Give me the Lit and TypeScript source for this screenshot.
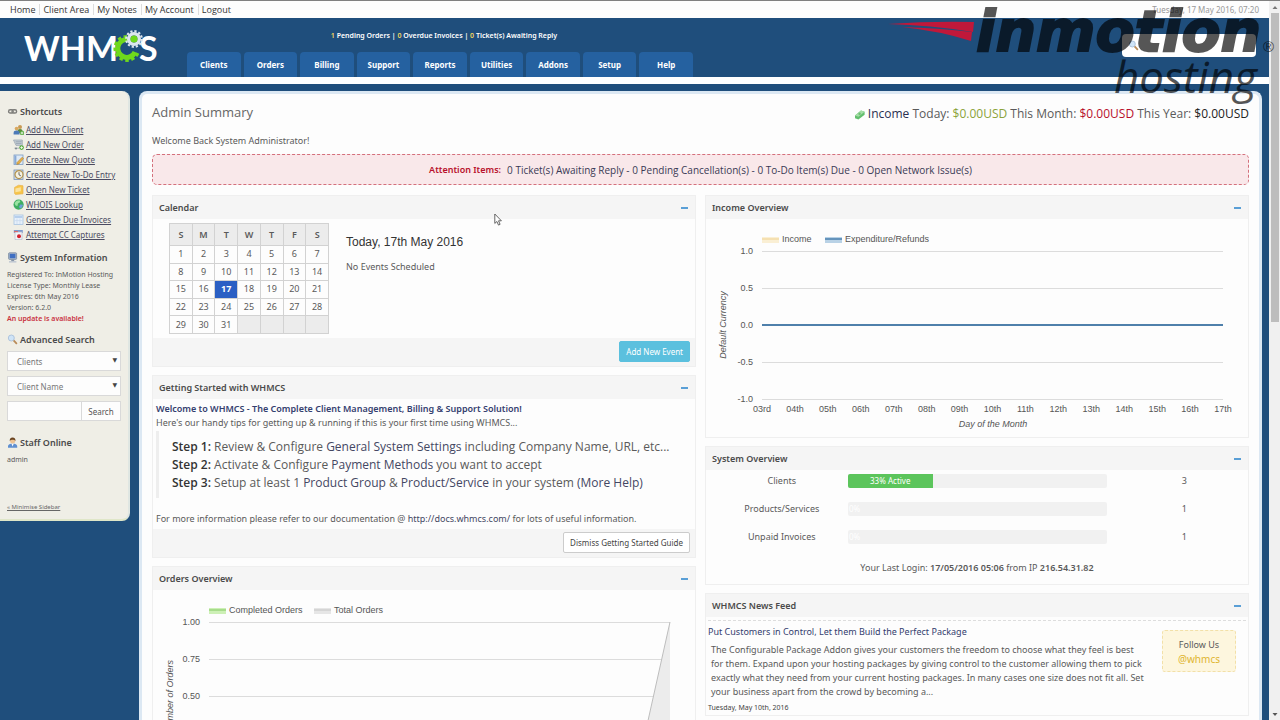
import { LitElement, html, svg, css, nothing } from "lit";
import { customElement, property } from "lit/decorators.js";

const ICONS: Record<string, unknown> = {
  link: svg`<g fill="none" stroke="#7d7d7a" stroke-width="1.4"><rect x="1.6" y="3.8" width="4.6" height="3.2" rx="1.6"/><rect x="5" y="3.8" width="4.6" height="3.2" rx="1.6"/></g>`,
  client: svg`<circle cx="7" cy="3" r="2" fill="#c99a55"/><path d="M4.5 9V7q0-2 2.5-2t2.6 2v2z" fill="#5c8a3a"/><circle cx="3.6" cy="4.6" r="1.9" fill="#d8a860"/><path d="M0.6 10.6V9q0-2.4 3-2.4t3 2.4v1.6z" fill="#4d7ab8"/><circle cx="9" cy="9" r="2.2" fill="#56a83c"/><path d="M7.6 9h2.8M9 7.6v2.8" stroke="#fff" stroke-width=".8"/>`,
  order: svg`<path d="M0.5 1h8.8v5.4H3z" fill="#c4ced6" stroke="#a0aab4" stroke-width=".8"/><path d="M1.4 9.2h5M2.6 2.8h6M3 4.6h5.4" stroke="#8a97a6" stroke-width=".7"/><circle cx="3" cy="9.6" r="1" fill="#7b868c"/><circle cx="8.6" cy="8.6" r="2.3" fill="#58ad3e"/><path d="M7.2 8.6H10M8.6 7.2V10" stroke="#fff" stroke-width=".8"/>`,
  quote: svg`<rect x="1" y="1" width="9" height="9.5" fill="#dde9f6" stroke="#7d9cc4" stroke-width=".8"/><path d="M1.4 1.5h2v8.6h-2z" fill="#88a9d6"/><path d="M4 8.5l5-5.2 1.6 1.2-4.6 5.4-2.2.5z" fill="#e6b048" stroke="#a87a2a" stroke-width=".5"/>`,
  todo: svg`<rect x="1" y="1" width="9" height="9.5" fill="#cfdcea" stroke="#7a92b3" stroke-width=".8"/><circle cx="6" cy="5.6" r="4" fill="#f4f1e2" stroke="#b4934c" stroke-width="1.2"/><path d="M6 3.2v2.6l1.8 1" fill="none" stroke="#555" stroke-width=".9"/>`,
  ticket: svg`<path d="M1.6 3.4l4-2.2L10 1.8v8L2.4 10.4 1.6 9.6z" fill="#f7c64a" stroke="#eab04a" stroke-width=".7"/><path d="M2.4 4.6l5.4-1.4v4L2.4 8.2z" fill="#fbe3a0"/>`,
  whois: svg`<circle cx="5.6" cy="5.6" r="5.1" fill="#3fae62"/><path d="M1.6 4.4Q3 1 6.6 1.2L7.4 3 5 4.6 4.4 7 2.6 6.6z" fill="#9be3a2"/><path d="M7.4 5.4l2.6.4-1 2.6-2 1-1-1.6z" fill="#6f9fdc"/>`,
  invoice: svg`<rect x="1" y="1" width="9" height="9.4" fill="#e7f0fa" stroke="#a9c3e2" stroke-width=".8"/><path d="M1.5 2h8v2h-8z" fill="#b7cfec"/><path d="M4 4.5v5.6M7 4.5v5.6M1.5 6.6h8" stroke="#c5d8ee" stroke-width=".7"/>`,
  capture: svg`<path d="M0.8 1h9v3h-9z" fill="#7e9cce"/><path d="M2 3h7v7.6H2z" fill="#f3f4f8" stroke="#b3b9cc" stroke-width=".7"/><path d="M1 2.6h4" stroke="#d66"/><circle cx="6" cy="7.2" r="2" fill="#d4232e"/>`,
  computer: svg`<rect x="1.6" y=".8" width="8" height="6.6" rx=".8" fill="#a9b8cc" stroke="#6f7f96" stroke-width=".7"/><rect x="2.8" y="1.9" width="5.6" height="4.3" fill="#3f6fc2"/><path d="M4.5 7.6h2.4l.5 1.6H4z" fill="#8795a8"/><path d="M2 9.2h7.4v1.3H2z" fill="#b9c3d0"/>`,
  search: svg`<path d="M6.6 6.4L9.4 9.4" stroke="#b98c5a" stroke-width="1.8" stroke-linecap="round"/><circle cx="4.3" cy="4" r="3" fill="#cfe4f7" stroke="#a9c0da" stroke-width=".9"/>`,
  staff: svg`<path d="M1 10.8V9q.4-2.6 4.6-2.6T10.2 9v1.8z" fill="#5f8fd0"/><path d="M4.4 6.4h2.4l-1.2 3z" fill="#fff"/><circle cx="5.6" cy="4" r="2.5" fill="#eec394"/><path d="M2.8 4.2Q2.4.6 5.6.6T8.4 4.2Q7.6 2.6 5.6 2.8 3.4 2.6 2.8 4.2z" fill="#6b4420"/>`,
  cash: svg`<path d="M1 6.4l6-4.8 3.6 1.2v3L4.4 10.6 1 9.2z" fill="#63bf6e"/><path d="M1 6.4l6-4.8 3.6 1.2L4.4 7.8z" fill="#a5dda6"/><circle cx="5.6" cy="4.8" r="1.2" fill="#6cc073"/>`,
};

const icon = (name: string) =>
  html`<svg class="icon" viewBox="0 0 11 11" width="11" height="11" aria-hidden="true">${ICONS[name]}</svg>`;

@customElement("dash-panel")
export class DashPanel extends LitElement {
  @property() heading = "";
  @property({ type: Boolean }) footer = false;

  static styles = css`
    :host { display: block; background: #fdfdfd; border: 1px solid #efefef; box-sizing: border-box; }
    .head { display: flex; align-items: center; justify-content: space-between; height: 23px; padding: 0 7px 0 6px; background: #f5f5f5; }
    h2 { margin: 0; font-size: 9px; line-height: 14px; font-weight: 600; color: #4a4a4a; }
    button { border: 0; padding: 0; background: none; width: 7px; height: 6px; display: flex; align-items: center; }
    button::before { content: ""; width: 7px; height: 2px; background: #5a9fd6; }
    .foot { display: flex; justify-content: flex-end; align-items: flex-start; height: 28px; padding: 3px 5px 0; background: #f5f5f5; box-sizing: border-box; }
  `;

  render() {
    return html`
      <div class="head"><h2>${this.heading}</h2><button aria-label="Collapse ${this.heading}"></button></div>
      <slot></slot>
      ${this.footer ? html`<div class="foot"><slot name="footer"></slot></div>` : nothing}
    `;
  }
}

interface Series { name: string; x: number; stroke: string; fill: string; }

@customElement("area-chart")
export class AreaChart extends LitElement {
  @property({ attribute: false }) series: Series[] = [];
  @property({ attribute: false }) ticks: string[] = [];
  @property({ attribute: false }) days: string[] = [];
  @property({ attribute: false }) plot: unknown = nothing;
  @property() yTitle = "";
  @property() xTitle = "";

  static styles = css`
    :host { display: block; }
    svg { display: block; width: 100%; font-family: "Liberation Sans", Arial, sans-serif; }
    text { font-size: 9px; fill: #555; }
    .end { text-anchor: end; }
    .mid { text-anchor: middle; }
    .it { font-style: italic; }
    .grid { stroke: #dcdcdc; }
  `;

  render() {
    const step = 461 / 14;
    return html`<svg viewBox="0 0 542 218" role="img" aria-label=${this.yTitle}>
      ${this.series.map((s) => svg`
        <rect x=${s.x} y="18" width="17" height="6" fill=${s.fill}/>
        <path d="M${s.x} 20h17" stroke=${s.stroke} stroke-width="1.5"/>
        <text x=${s.x + 20} y="23">${s.name}</text>`)}
      ${this.ticks.map((t, i) => svg`
        <path class="grid" d="M56 ${32.5 + i * 37}H517"/>
        <text class="end" x="47" y=${35 + i * 37}>${t}</text>`)}
      ${this.plot}
      ${this.days.map((d, i) => svg`<text class="mid" x=${56 + i * step} y="193">${d}</text>`)}
      <text class="mid it" x="287" y="208">${this.xTitle}</text>
      <text class="mid it" transform="translate(20 106) rotate(-90)">${this.yTitle}</text>
    </svg>`;
  }
}

const SHORTCUTS: [string, string][] = [
  ["client", "Add New Client"], ["order", "Add New Order"], ["quote", "Create New Quote"],
  ["todo", "Create New To-Do Entry"], ["ticket", "Open New Ticket"], ["whois", "WHOIS Lookup"],
  ["invoice", "Generate Due Invoices"], ["capture", "Attempt CC Captures"],
];
const NAV = ["Clients", "Orders", "Billing", "Support", "Reports", "Utilities", "Addons", "Setup", "Help"];
const DAYS = ["03rd", "04th", "05th", "06th", "07th", "08th", "09th", "10th", "11th", "12th", "13th", "14th", "15th", "16th", "17th"];
const WEEKS = [0, 1, 2, 3, 4].map((w) => [1, 2, 3, 4, 5, 6, 7].map((d) => w * 7 + d));
const STATS = [
  { name: "Clients", pct: 33, label: "33% Active", value: 3 },
  { name: "Products/Services", pct: 0, label: "0%", value: 1 },
  { name: "Unpaid Invoices", pct: 0, label: "0%", value: 1 },
];

@customElement("app-root")
export class AppRoot extends LitElement {
  static styles = css`
    :host { display: grid; grid-template-columns: 1fr 11px; height: 100vh; overflow: hidden; position: relative; box-sizing: border-box; border-top: 1px solid #808080; background: #1f4e7c; font: 9px/14px "Noto Sans", "Open Sans", sans-serif; color: #5a5a5a; }
    * { box-sizing: border-box; }
    a { color: inherit; text-decoration: none; }
    p, h1, h2, h3, ul { margin: 0; padding: 0; }
    button, input, select { font-family: inherit; }
    .icon { flex: none; display: block; }
    .page { min-width: 0; min-height: 0; overflow: hidden; }

    .topbar { display: flex; justify-content: space-between; align-items: center; height: 17px; padding: 0 10px; background: #fdfdfd; font-family: "Open Sans", sans-serif; }
    .topbar nav { display: flex; color: #333; line-height: 11px; }
    .topbar a + a { margin-left: 4px; padding-left: 3px; border-left: 1px solid #ddd; }
    .date { color: #999; font: 8px/14px "Noto Sans", sans-serif; }

    .header { display: flex; height: 59px; padding: 0 13px 0 24px; color: #fff; }
    .logo { width: 163px; padding-top: 8px; }
    .logo text { font-family: Lato, sans-serif; font-weight: 700; font-size: 34px; fill: #fff; }
    .menu { display: flex; flex-direction: column; justify-content: space-between; width: 506px; padding-top: 11px; }
    .pending { text-align: center; font-size: 7px; font-weight: 600; padding-left: 8px; }
    .pending b { color: #f3d65c; font-weight: 600; }
    .tabs { display: grid; grid-template-columns: repeat(9, 1fr); gap: 3px; }
    .tabs a { height: 25px; line-height: 25px; text-align: center; font-size: 8px; font-weight: 700; background: #2561a0; border-radius: 4px 4px 0 0; }
    .find { display: flex; align-items: center; margin: 16px 0 0 auto; width: 134px; height: 23px; padding: 0 6px; background: #fff; border-radius: 4px; }
    .find input { min-width: 0; flex: 1; border: 0; outline: 0; background: none; font-size: 9px; }
    .stripe { height: 7px; background: #fff; margin-bottom: 7px; }

    .columns { display: flex; align-items: flex-start; gap: 9px; padding-right: 7px; }
    .side { width: 130px; flex: none; height: 430px; padding: 13px 8px 0 7px; background: #efeee6; border-right: 2px solid #dfe6e2; border-bottom: 2px solid #dfe6c8; border-radius: 0 8px 8px 0; display: flex; flex-direction: column; }
    .side h3 { display: flex; align-items: center; gap: 2px; height: 15px; font-size: 9px; font-weight: 600; color: #4a4a4a; white-space: nowrap; }
    .links { list-style: none; padding: 3px 0 0 6px; font-size: 8px; }
    .links a { display: flex; align-items: center; gap: 2px; height: 15px; white-space: nowrap; color: #4b4b62; }
    .links span { text-decoration: underline; }
    .info { font-size: 7px; line-height: 11px; padding-top: 4px; white-space: nowrap; }
    .info strong { display: block; font-weight: 600; color: #c9333f; }
    .gap-s { margin-top: 8px; }
    .gap-l { margin-top: 14px; }
    .search-form { display: grid; gap: 5px; padding-top: 4px; width: 114px; }
    .pick { position: relative; display: block; height: 20px; }
    .pick::after { content: "▼"; position: absolute; right: 4px; top: 2px; font: 6px/14px "DejaVu Sans", sans-serif; color: #444; }
    select { appearance: none; width: 100%; height: 20px; padding: 0 9px; border: 1px solid #d9d9d9; background: #fdfdfd; border-radius: 0; font-size: 8px; color: #777; }
    .row { display: flex; height: 20px; }
    .row input { width: 75px; border: 1px solid #d9d9d9; background: #fdfdfd; padding: 0 4px; font-size: 8px; }
    .row button { flex: 1; border: 1px solid #d9d9d9; border-left: 0; background: #fdfdfd; padding: 0; font-size: 8px; color: #555; }
    .mini { font-size: 6px; line-height: 10px; color: #666; text-decoration: underline; margin: auto 0 7px; }

    .main { flex: 1; min-width: 0; padding: 10px; background: #fdfdfd; border: 3px solid #dce8f3; border-bottom: 0; border-radius: 8px 8px 0 0; min-height: 640px; }
    .titlebar { display: flex; justify-content: space-between; align-items: flex-end; height: 20px; font-family: "Open Sans", sans-serif; margin-bottom: 10px; }
    h1 { font-size: 13px; line-height: 24px; font-weight: 400; color: #666; }
    .income { display: flex; align-items: center; gap: 3px; font-size: 12px; line-height: 20px; white-space: nowrap; }
    .income a { color: #2a2f50; }
    .green { color: #8ba33a; }
    .red { color: #b8102c; }
    .black { color: #222; }
    .alert { display: flex; justify-content: center; align-items: center; gap: 6px; height: 31px; margin: 6px 0 10px; background: #f9e8ea; border: 1px dashed #d4707c; border-radius: 5px; color: #3a3a55; }
    .alert span { font: 10px/14px "Open Sans", sans-serif; }
    .alert strong { color: #b8102c; font-weight: 600; }
    .grid { display: grid; grid-template-columns: 1fr 1fr; gap: 9px; align-items: start; }
    .col { display: grid; gap: 8px; min-width: 0; }

    .cal { display: flex; gap: 17px; height: 119px; padding: 4px 16px; }
    table { width: 160px; height: 111px; table-layout: fixed; border-collapse: collapse; }
    th, td { border: 1px solid #d2d2d2; padding: 0; text-align: center; line-height: 12px; font-weight: 400; }
    th { height: 22px; background: #ececec; font-weight: 600; }
    td.today { background: #2a5fc4; color: #fff; font-weight: 700; }
    td.blank { background: #ececec; }
    .events h3 { font: 12px/16px "Liberation Sans", Arial, sans-serif; color: #333; margin: 11px 0 10px; }
    .btn { height: 21px; padding: 0 6px; border-radius: 2px; font-size: 8px; border: 1px solid #ccc; background: #fff; color: #444; }
    .btn.info-btn { background: #5bc0de; border-color: #5bc0de; color: #fff; }

    .guide { height: 130px; padding: 3px; white-space: nowrap; }
    .guide h3 { font-size: 9px; line-height: 14px; font-weight: 600; color: #34406f; }
    .steps { margin: 1px 0 14px; padding: 7px 0 6px 13px; border-left: 3px solid #eee; font: 12px/18px "Open Sans", sans-serif; }
    .steps b { font-weight: 600; color: #333; }
    .steps a, .guide p a { color: #444763; }

    .stats { height: 114px; padding: 4px 0 0; }
    .stat { display: grid; grid-template-columns: 3fr 6fr 3fr; align-items: center; height: 14px; margin-bottom: 14px; text-align: center; }
    .stat .name { padding-left: 16px; }
    .stat .value { padding-left: 8px; }
    .bar { height: 14px; margin: 0 6px; background: #f1f1f1; border-radius: 2px; overflow: hidden; }
    .fill { height: 14px; min-width: 14px; font-size: 8px; color: #fff; }
    .fill.on { background: #5cc55c; }
    .login { text-align: center; padding-top: 3px; }
    .login b { font-weight: 600; }

    .news { height: 98px; padding: 3px 2px; }
    .story { display: flex; justify-content: space-between; border-top: 1px dashed #ddd; padding-top: 4px; }
    .story h3 { font-size: 9px; font-weight: 400; color: #34406f; margin-bottom: 4px; }
    .story p { padding-left: 3px; white-space: nowrap; }
    .story small { display: block; font-size: 7px; color: #444; line-height: 18px; }
    .follow { width: 74px; height: 42px; margin: 5px 10px 0 0; padding-top: 6px; text-align: center; background: #fdf6de; border: 1px dashed #f2e0a8; border-radius: 3px; line-height: 15px; }
    .follow a { display: block; font-size: 10px; color: #dfb530; }

    .scroll { display: flex; flex-direction: column; justify-content: space-between; background: #f0f0f0; padding: 3px 1px 2px 2px; }
    .track { flex: 1; padding-top: 3px; }
    .thumb { height: 309px; background: #bdbdbd; }
    .scroll svg { display: block; }
    .brand { position: absolute; right: 0; top: 0; pointer-events: none; overflow: visible; }
    .brand text { fill: #000; }
    .brand .wide { font: italic 700 57px "DejaVu Sans", sans-serif; stroke: #000; stroke-width: 2; }
    .brand .thin { font: italic 400 44px "Open Sans", sans-serif; }
    .brand .reg { font: 15px "Liberation Sans", sans-serif; }
    .cursor { position: absolute; left: 494px; top: 212px; pointer-events: none; }
  `;

  private renderHeader() {
    return html`
      <div class="topbar">
        <nav>${["Home", "Client Area", "My Notes", "My Account", "Logout"].map((t) => html`<a href="#">${t}</a>`)}</nav>
        <span class="date">Tuesday, 17 May 2016, 07:20</span>
      </div>
      <header class="header">
        <div class="logo">
          <svg width="140" height="44" viewBox="0 0 140 44" role="img" aria-label="WHMCS">
            <text x="0" y="35">WHM</text><text x="115" y="35">S</text>
            <g fill="none" stroke="#6fd81c">
              <path d="M104 13.5A9 9 0 1 0 111 26" stroke-width="5"/>
              <path d="M103 10.4A12 12 0 1 0 114 27" stroke-width="3" stroke-dasharray="3.4 2.6"/>
            </g>
            <circle cx="110" cy="13" r="5.2" fill="none" stroke="#dce5ee" stroke-width="3.6"/>
            <circle cx="110" cy="13" r="7.8" fill="none" stroke="#dce5ee" stroke-width="2.2" stroke-dasharray="2.2 1.9"/>
            <circle cx="110" cy="13" r="3.6" fill="#6fd81c"/>
          </svg>
        </div>
        <div class="menu">
          <div class="pending"><b>1</b> Pending Orders | <b>0</b> Overdue Invoices | <b>0</b> Ticket(s) Awaiting Reply</div>
          <nav class="tabs">${NAV.map((t) => html`<a href="#">${t}</a>`)}</nav>
        </div>
        <label class="find">${icon("search")}<input type="text" aria-label="Search" /></label>
      </header>
      <div class="stripe"></div>`;
  }

  private renderSide() {
    return html`<aside class="side">
      <h3>${icon("link")}Shortcuts</h3>
      <ul class="links">${SHORTCUTS.map(([i, t]) => html`<li><a href="#">${icon(i)}<span>${t}</span></a></li>`)}</ul>
      <h3 class="gap-s">${icon("computer")}System Information</h3>
      <div class="info">Registered To: InMotion Hosting<br />License Type: Monthly Lease<br />Expires: 6th May 2016<br />Version: 6.2.0<strong>An update is available!</strong></div>
      <h3 class="gap-s">${icon("search")}Advanced Search</h3>
      <form class="search-form">
        <label class="pick"><select aria-label="Search in"><option>Clients</option></select></label>
        <label class="pick"><select aria-label="Search by"><option>Client Name</option></select></label>
        <div class="row"><input type="text" aria-label="Search term" /><button type="button">Search</button></div>
      </form>
      <h3 class="gap-l">${icon("staff")}Staff Online</h3>
      <div class="info">admin</div>
      <a class="mini" href="#">« Minimise Sidebar</a>
    </aside>`;
  }

  private renderLeft() {
    return html`<div class="col">
      <dash-panel heading="Calendar" footer>
        <div class="cal">
          <table>
            <thead><tr>${[..."SMTWTFS"].map((d) => html`<th>${d}</th>`)}</tr></thead>
            <tbody>${WEEKS.map((w) => html`<tr>${w.map((d) => html`<td class=${d > 31 ? "blank" : d === 17 ? "today" : ""}>${d > 31 ? "" : d}</td>`)}</tr>`)}</tbody>
          </table>
          <div class="events"><h3>Today, 17th May 2016</h3><p>No Events Scheduled</p></div>
        </div>
        <button slot="footer" class="btn info-btn">Add New Event</button>
      </dash-panel>
      <dash-panel heading="Getting Started with WHMCS" footer>
        <div class="guide">
          <h3>Welcome to WHMCS - The Complete Client Management, Billing &amp; Support Solution!</h3>
          <p>Here's our handy tips for getting up &amp; running if this is your first time using WHMCS...</p>
          <div class="steps">
            <b>Step 1:</b> Review &amp; Configure <a href="#">General System Settings</a> including Company Name, URL, etc...<br />
            <b>Step 2:</b> Activate &amp; Configure <a href="#">Payment Methods</a> you want to accept<br />
            <b>Step 3:</b> Setup at least 1 <a href="#">Product Group</a> &amp; <a href="#">Product/Service</a> in your system <a href="#">(More Help)</a>
          </div>
          <p>For more information please refer to our documentation @ <a href="#">http://docs.whmcs.com/</a> for lots of useful information.</p>
        </div>
        <button slot="footer" class="btn">Dismiss Getting Started Guide</button>
      </dash-panel>
      <dash-panel heading="Orders Overview">
        <area-chart yTitle="Number of Orders" xTitle="Day of the Month"
          .series=${[
            { name: "Completed Orders", x: 56, stroke: "#9ad67c", fill: "#cdf0b6" },
            { name: "Total Orders", x: 161, stroke: "#cfcfcf", fill: "#e6e6e6" },
          ]}
          .ticks=${["1.00", "0.75", "0.50", "0.25", "0.00"]} .days=${DAYS}
          .plot=${svg`<path d="M484 180L517 32V180z" fill="#ececec"/><path d="M56 180H484L517 32" fill="none" stroke="#bdbdbd"/>`}></area-chart>
      </dash-panel>
    </div>`;
  }

  private renderRight() {
    return html`<div class="col">
      <dash-panel heading="Income Overview">
        <area-chart yTitle="Default Currency" xTitle="Day of the Month"
          .series=${[
            { name: "Income", x: 56, stroke: "#f3dba6", fill: "#faefd4" },
            { name: "Expenditure/Refunds", x: 119, stroke: "#4a7fae", fill: "#b9d2e6" },
          ]}
          .ticks=${["1.0", "0.5", "0.0", "-0.5", "-1.0"]} .days=${DAYS}
          .plot=${svg`<path d="M56 106H517" stroke="#4f80ab" stroke-width="2"/>`}></area-chart>
      </dash-panel>
      <dash-panel heading="System Overview">
        <div class="stats">
          ${STATS.map((s) => html`<div class="stat">
            <span class="name">${s.name}</span>
            <div class="bar"><div class=${s.pct ? "fill on" : "fill"} style="width:${s.pct}%">${s.label}</div></div>
            <span class="value">${s.value}</span>
          </div>`)}
          <p class="login">Your Last Login: <b>17/05/2016 05:06</b> from IP <b>216.54.31.82</b></p>
        </div>
      </dash-panel>
      <dash-panel heading="WHMCS News Feed">
        <div class="news">
          <div class="story">
            <div>
              <h3><a href="#">Put Customers in Control, Let them Build the Perfect Package</a></h3>
              <p>The Configurable Package Addon gives your customers the freedom to choose what they feel is best<br />for them. Expand upon your hosting packages by giving control to the customer allowing them to pick<br />exactly what they need from your current hosting packages. In many cases one size does not fit all. Set<br />your business apart from the crowd by becoming a...</p>
              <small>Tuesday, May 10th, 2016</small>
            </div>
            <div class="follow">Follow Us<a href="#">@whmcs</a></div>
          </div>
        </div>
      </dash-panel>
    </div>`;
  }

  render() {
    return html`
      <div class="page">
        ${this.renderHeader()}
        <div class="columns">
          ${this.renderSide()}
          <main class="main">
            <div class="titlebar">
              <h1>Admin Summary</h1>
              <div class="income">${icon("cash")}<span><a href="#">Income</a> Today: <span class="green">$0.00USD</span> This Month: <span class="red">$0.00USD</span> This Year: <span class="black">$0.00USD</span></span></div>
            </div>
            <p>Welcome Back System Administrator!</p>
            <div class="alert"><strong>Attention Items:</strong><span>0 Ticket(s) Awaiting Reply - 0 Pending Cancellation(s) - 0 To-Do Item(s) Due - 0 Open Network Issue(s)</span></div>
            <div class="grid">${this.renderLeft()}${this.renderRight()}</div>
          </main>
        </div>
      </div>
      <div class="scroll" aria-hidden="true">
        <svg width="8" height="6" viewBox="0 0 8 6"><path d="M1.5 5L4 2l2.5 3z" fill="#777"/></svg>
        <div class="track"><div class="thumb"></div></div>
        <svg width="8" height="6" viewBox="0 0 8 6"><path d="M1.5 1L4 4l2.5-3z" fill="#555"/></svg>
      </div>
      <svg class="brand" width="400" height="120" viewBox="0 0 400 120" role="img" aria-label="InMotion Hosting">
        <path d="M8 23Q50 20 94 21L93 31Q50 24 8 23z" fill="#c0183a"/>
        <path d="M22 26Q58 27 92 31L91 40Q60 30 22 26z" fill="#c0183a"/>
        <g opacity=".66"><text class="wide" x="96" y="50">inmotion</text><text class="thin" x="234" y="92">hosting</text><text class="reg" x="383" y="51">®</text></g>
      </svg>
      <svg class="cursor" width="9" height="14" viewBox="0 0 9 14" aria-hidden="true"><path d="M.8 1v9.4l2.1-1.9 1.6 3.6 1.6-.8-1.6-3.5h2.9z" fill="#fff" stroke="#555" stroke-width=".9"/></svg>
    `;
  }
}
